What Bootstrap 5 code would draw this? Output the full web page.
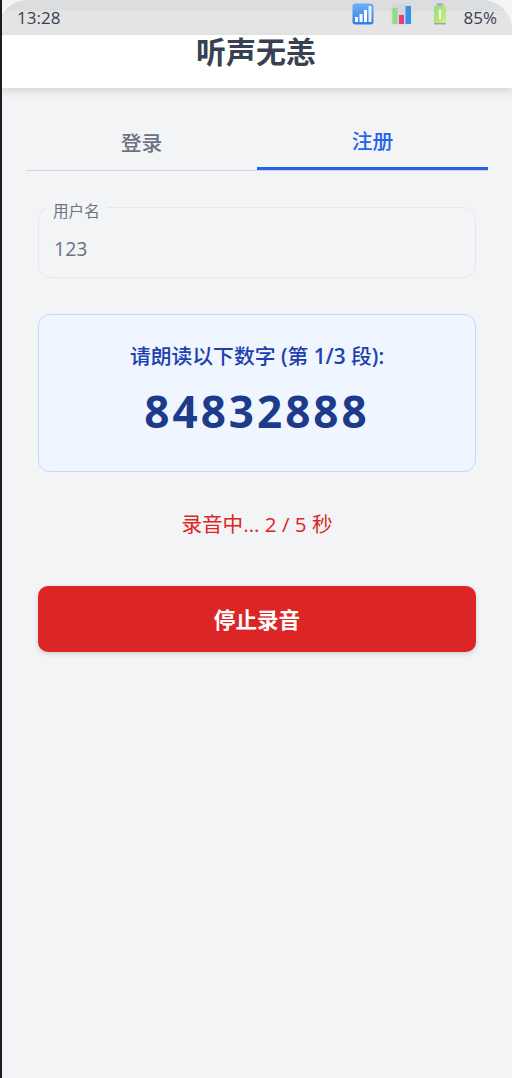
<!DOCTYPE html>
<html lang="zh">
<head>
<meta charset="utf-8">
<title>听声无恙</title>
<link href="https://cdn.jsdelivr.net/npm/bootstrap@5.3.0/dist/css/bootstrap.min.css" rel="stylesheet">
<style>
html,body{height:100%}
body{background:#f3f4f6;font-family:"Open Sans","Noto Sans CJK SC",sans-serif;border-left:2px solid #1b1c1f;overflow:hidden}
.status-shell{height:35px;margin-left:-2px;padding-left:2px;background:#e4e4e4;border-radius:30px 30px 0 0;position:relative;overflow:hidden;color:#374151;font-size:17px;line-height:22px}
.status-band{height:11px;background:#dcdddf}
.status-row{padding:0 15px 0 15px;height:24px}
.status-time{margin-top:-4px;margin-left:2px}
.status-right{margin-top:-4px}
.status-pct{margin-left:17px}
.status-ico{margin-top:-4px}
.status-ico-b{margin-left:17px}
.status-ico-c{margin-left:21px}
.corner-bg{background:#f3f4f6;margin-left:-2px}
.top-head{height:53px;margin-left:-2px;background:#fff;box-shadow:0 4px 8px rgba(0,0,0,.12);position:relative;text-align:center}
.app-title{font-size:30px;font-weight:700;color:#374151;line-height:36px;margin:0;transform:translateY(-1px)}
.tab-strip{margin:28px 24px 0 24px;border-bottom:1px solid #d1d5db;height:55px}
.tab-item{flex:1 1 0;text-align:center;font-size:20.8px;font-weight:500;color:#6b7280;line-height:28px;padding-top:13px}
.tab-item.on{color:#2563eb;border-bottom:3px solid #2563eb;padding-top:11px}
.form-zone{padding:36px 36px 0}
.field-box{height:71px;border:1px solid #e5e7eb;border-radius:12px;position:relative;padding:27px 15px 0;font-size:19.5px;line-height:28px;color:#6b7280}
.field-tag{position:absolute;left:7px;top:-6px;background:#f3f4f6;padding:0 7px;font-size:15.6px;line-height:18px;color:#6b7280}
.prompt-box{margin-top:36px;height:158px;background:#eff6ff;border:1px solid #bfdbfe;border-radius:12px;text-align:center;padding-top:27px}
.prompt-text{font-size:20.8px;font-weight:500;color:#1e40af;line-height:28px}
.prompt-latin{font-weight:600}
.prompt-num{font-size:44px;font-weight:700;color:#1e3a8a;letter-spacing:3px;line-height:60px;margin-top:11px}
.rec-state{margin-top:37px;text-align:center;color:#dc2626;font-size:20.6px;line-height:30px}
.stop-btn{margin-top:47px;height:66px;width:100%;background:#dc2626;border:0;border-radius:10px;color:#fff;font-size:21.6px;font-weight:600;padding-top:8px;box-shadow:0 2px 5px rgba(0,0,0,.15)}
.stop-btn:hover,.stop-btn:active{background:#dc2626!important;color:#fff!important}
</style>
</head>
<body>
<div class="corner-bg">
<div class="status-shell">
  <div class="status-band"></div>
  <div class="status-row d-flex justify-content-between align-items-start">
    <span class="status-time">13:28</span>
    <div class="status-right d-flex align-items-start">
      <svg class="status-ico" width="22" height="22" viewBox="0 0 22 22">
        <defs><linearGradient id="g1" x1="0" y1="0" x2="0" y2="1"><stop offset="0" stop-color="#6fb0f7"/><stop offset="1" stop-color="#2f7de8"/></linearGradient></defs>
        <rect x="0.5" y="0.5" width="21" height="21" rx="3" fill="url(#g1)"/>
        <rect x="3" y="14" width="3" height="5" fill="#fff"/><rect x="7.5" y="11" width="3" height="8" fill="#fff"/><rect x="12" y="7" width="3" height="12" fill="#fff"/><rect x="16.5" y="3" width="3" height="16" fill="#e6f0ff"/>
      </svg>
      <svg class="status-ico status-ico-b" width="21" height="22" viewBox="0 0 21 22">
        <rect x="0.5" y="0.5" width="20" height="21" rx="2" fill="#d5d3dc"/>
        <rect x="1.5" y="5" width="5" height="16" fill="#8fdc84"/><rect x="8" y="12" width="5" height="9" fill="#ea3d78"/><rect x="14.5" y="3" width="5.5" height="18" fill="#3393e6"/>
      </svg>
      <svg class="status-ico status-ico-c" width="14" height="22" viewBox="0 0 14 22">
        <defs><linearGradient id="g2" x1="0" y1="0" x2="1" y2="1"><stop offset="0" stop-color="#8fdc8a"/><stop offset="1" stop-color="#d8ee7c"/></linearGradient></defs>
        <rect x="4" y="0.5" width="6" height="2.5" fill="#a8a6a8"/>
        <rect x="1" y="2.5" width="12" height="18.5" rx="1.5" fill="url(#g2)"/>
        <rect x="1" y="20" width="12" height="1.5" fill="#a89fb2"/>
        <rect x="6" y="7" width="2" height="9" fill="#f3fbe0"/>
      </svg>
      <span class="status-pct">85%</span>
    </div>
  </div>
</div>
</div>
<header class="top-head"><h1 class="app-title">听声无恙</h1></header>
<nav class="tab-strip d-flex">
  <div class="tab-item">登录</div>
  <div class="tab-item on">注册</div>
</nav>
<main class="form-zone">
  <div class="field-box"><span class="field-tag">用户名</span>123</div>
  <div class="prompt-box">
    <div class="prompt-text">请朗读以下数字 <span class="prompt-latin">(</span>第 <span class="prompt-latin">1/3</span> 段<span class="prompt-latin">):</span></div>
    <div class="prompt-num">84832888</div>
  </div>
  <div class="rec-state">录音中... 2 / 5 秒</div>
  <button type="button" class="btn stop-btn">停止录音</button>
</main>
<script src="https://cdn.jsdelivr.net/npm/bootstrap@5.3.0/dist/js/bootstrap.bundle.min.js"></script>
</body>
</html>
